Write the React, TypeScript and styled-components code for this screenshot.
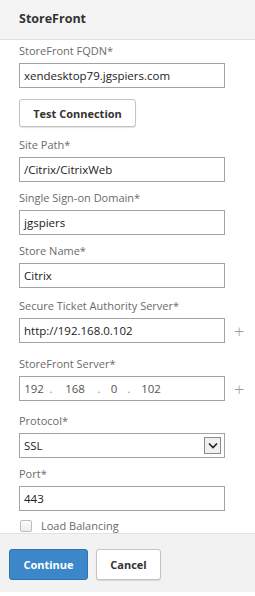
import React from "react";
import styled, { createGlobalStyle } from "styled-components";

const Global = createGlobalStyle`
  html, body { margin: 0; padding: 0; background: #ffffff; }
  body { font-family: "Open Sans", "Liberation Sans", sans-serif; }
  * { box-sizing: border-box; }
`;

const Page = styled.div`
  width: 255px;
  height: 596px;
  display: flex;
  flex-direction: column;
  background: #fff;
  overflow: hidden;
`;

const Header = styled.div`
  height: 41px;
  background: #f4f4f4;
  border-bottom: 1px solid #e0e0e0;
  padding: 10px 0 0 19px;
  font-size: 12.5px;
  font-weight: 700;
  color: #333;
  line-height: 18px;
`;

const Form = styled.div`
  flex: 1;
  display: flex;
  flex-direction: column;
  padding: 3px 0 0 19px;
`;

const Field = styled.div<{ $mt?: number }>`
  display: flex;
  flex-direction: column;
  margin-top: ${(p) => p.$mt ?? 0}px;
`;

const Label = styled.label`
  font-size: 11px;
  line-height: 16px;
  color: #6b6b6b;
  margin-bottom: 4px;
`;

const Row = styled.div`
  display: flex;
  align-items: center;
`;

const Input = styled.div`
  width: 206px;
  height: 25px;
  border: 1px solid #a3a3a3;
  padding: 0 4px;
  font-size: 11.5px;
  line-height: 23px;
  color: #222;
  white-space: nowrap;
  background: #fff;
`;

const IpInput = styled(Input)`
  display: flex;
  color: #555;
`;

const IpPart = styled.span<{ $w: number }>`
  width: ${(p) => p.$w}px;
  text-align: center;
`;

const IpDot = styled.span`
  width: 14px;
  text-align: center;
  color: #888;
`;

const Plus = styled.span`
  margin-left: 9px;
  font-size: 18px;
  font-weight: 300;
  color: #9a9a9a;
  line-height: 18px;
`;

const SecondaryButton = styled.button`
  font-family: "Open Sans", "Liberation Sans", sans-serif;
  background: #fff;
  border: 1px solid #c4c4c4;
  border-radius: 3px;
  box-shadow: 0 1px 1px rgba(0, 0, 0, 0.12);
  color: #333;
  font-weight: 700;
  font-size: 11px;
  padding: 0;
  cursor: pointer;
`;

const TestButton = styled(SecondaryButton)`
  width: 117px;
  height: 28px;
  margin-top: 11px;
`;

const Select = styled.div`
  width: 206px;
  height: 25px;
  border: 1px solid #a3a3a3;
  display: flex;
  align-items: center;
  justify-content: space-between;
  padding: 0 3px 0 4px;
  font-size: 11.5px;
  color: #222;
`;

const SelectArrow = styled.div`
  width: 17px;
  height: 17px;
  border: 1px solid #8c8c8c;
  background: #f0f0f0;
  display: flex;
  align-items: center;
  justify-content: center;
`;

const CheckRow = styled.div`
  display: flex;
  align-items: center;
  margin-top: 8px;
  padding-left: 1px;
`;

const Check = styled.span`
  width: 12px;
  height: 12px;
  border: 1px solid #bdbdbd;
  border-radius: 2px;
  background: linear-gradient(#fdfdfd, #ececec);
  margin-right: 9px;
`;

const CheckText = styled.span`
  font-size: 11px;
  color: #6b6b6b;
  line-height: 14px;
`;

const Footer = styled.div`
  height: 60px;
  background: #f2f2f2;
  border-top: 1px solid #e2e2e2;
  display: flex;
  align-items: flex-start;
  padding: 15px 0 0 9px;
  gap: 8px;
  margin-bottom: 4px;
`;

const PrimaryButton = styled.button`
  font-family: "Open Sans", "Liberation Sans", sans-serif;
  width: 79px;
  height: 31px;
  background: #3b87c9;
  border: 1px solid #2f74b1;
  border-radius: 3px;
  color: #fff;
  font-weight: 700;
  font-size: 11px;
  padding: 0;
`;

const CancelButton = styled(SecondaryButton)`
  width: 65px;
  height: 31px;
`;

export default function App() {
  return (
    <Page>
      <Global />
      <Header>StoreFront</Header>
      <Form>
        <Field>
          <Label>StoreFront FQDN*</Label>
          <Input>xendesktop79.jgspiers.com</Input>
        </Field>
        <div>
          <TestButton>Test Connection</TestButton>
        </div>
        <Field $mt={10}>
          <Label>Site Path*</Label>
          <Input>/Citrix/CitrixWeb</Input>
        </Field>
        <Field $mt={8}>
          <Label>Single Sign-on Domain*</Label>
          <Input>jgspiers</Input>
        </Field>
        <Field $mt={8}>
          <Label>Store Name*</Label>
          <Input>Citrix</Input>
        </Field>
        <Field $mt={10}>
          <Label>Secure Ticket Authority Server*</Label>
          <Row>
            <Input>http://192.168.0.102</Input>
            <Plus>+</Plus>
          </Row>
        </Field>
        <Field $mt={13}>
          <Label>StoreFront Server*</Label>
          <Row>
            <IpInput>
              <IpPart $w={20}>192</IpPart>
              <IpDot>.</IpDot>
              <IpPart $w={34}>168</IpPart>
              <IpDot>.</IpDot>
              <IpPart $w={16}>0</IpPart>
              <IpDot>.</IpDot>
              <IpPart $w={30}>102</IpPart>
            </IpInput>
            <Plus>+</Plus>
          </Row>
        </Field>
        <Field $mt={12}>
          <Label>Protocol*</Label>
          <Select>
            <span>SSL</span>
            <SelectArrow>
              <svg width="10" height="7" viewBox="0 0 10 7">
                <path d="M1 1.5 L5 5.5 L9 1.5" fill="none" stroke="#222" strokeWidth="1.6" />
              </svg>
            </SelectArrow>
          </Select>
        </Field>
        <Field $mt={8}>
          <Label>Port*</Label>
          <Input>443</Input>
        </Field>
        <CheckRow>
          <Check />
          <CheckText>Load Balancing</CheckText>
        </CheckRow>
      </Form>
      <Footer>
        <PrimaryButton>Continue</PrimaryButton>
        <CancelButton>Cancel</CancelButton>
      </Footer>
    </Page>
  );
}
